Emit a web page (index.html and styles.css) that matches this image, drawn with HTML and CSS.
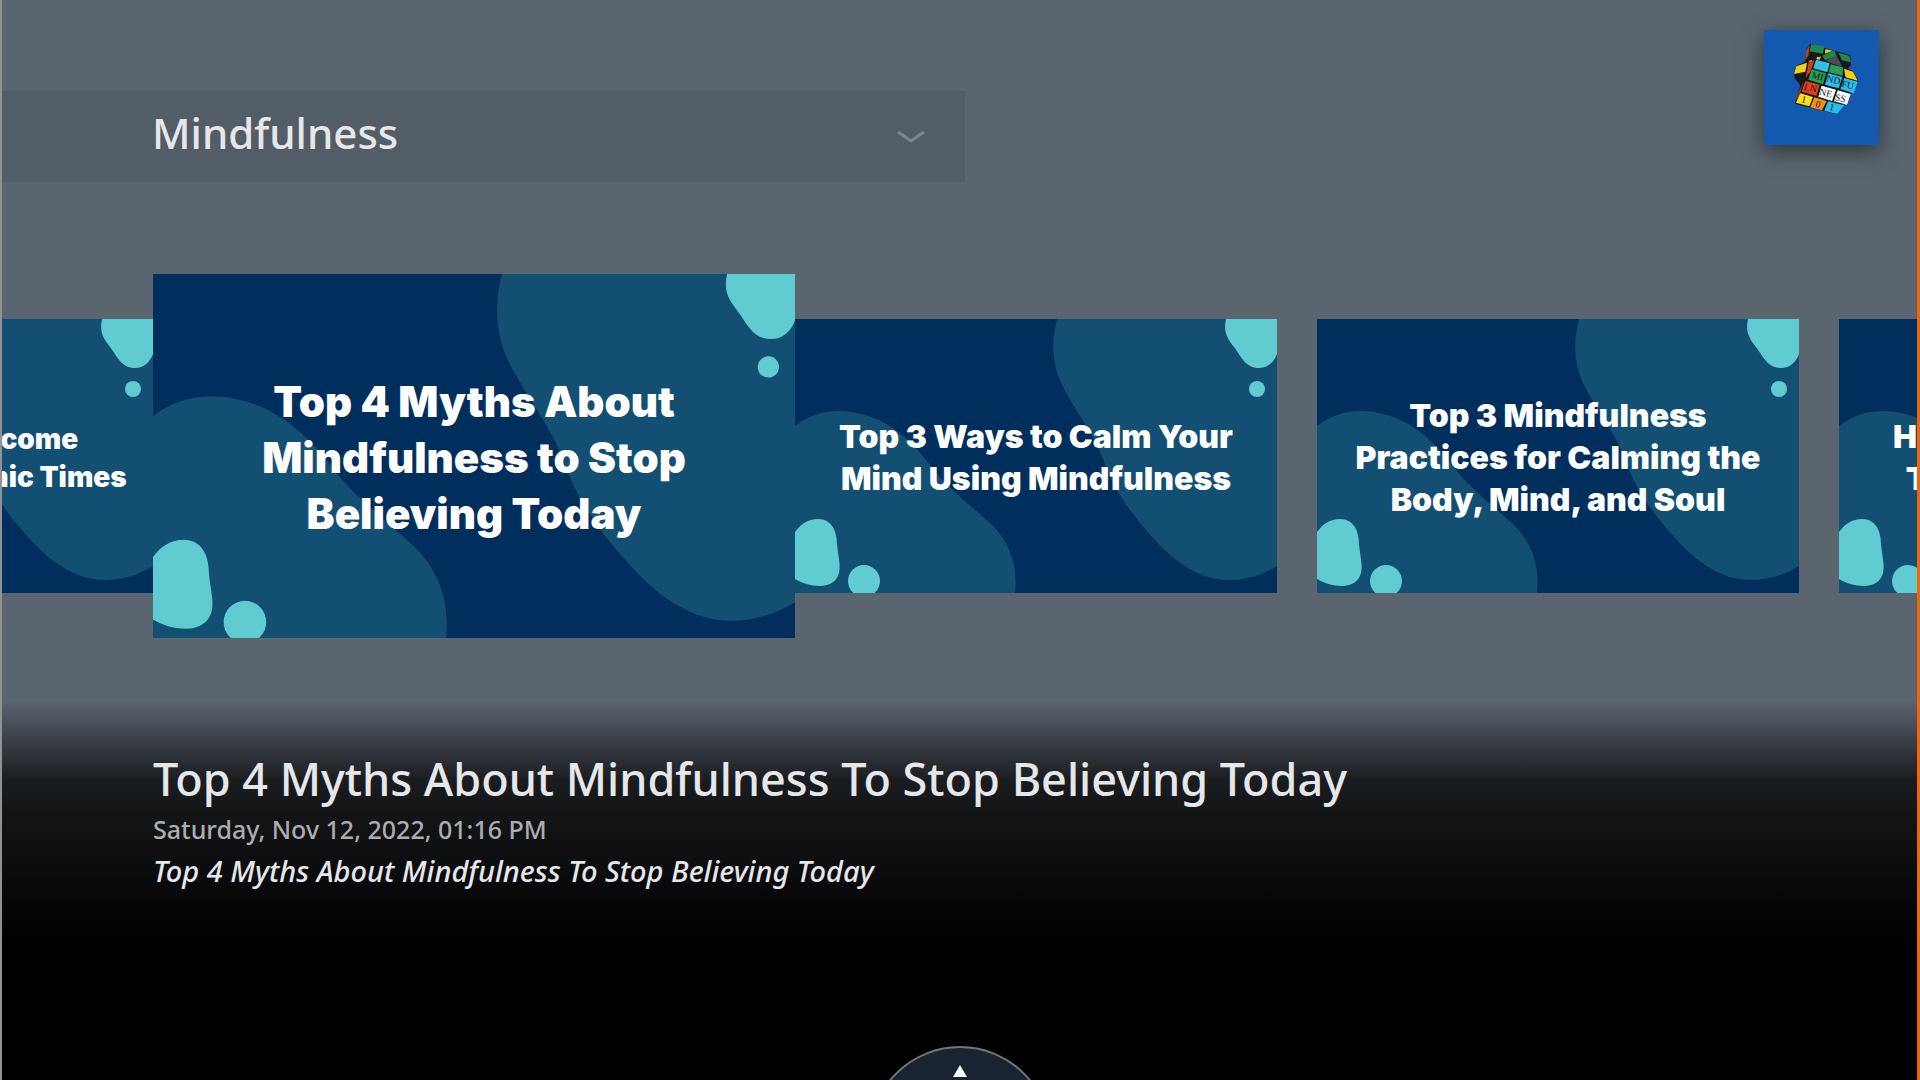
FILE: index.html
```html
<!DOCTYPE html>
<html lang="en">

<head>
  <meta charset="UTF-8">
  <meta name="viewport" content="width=device-width, initial-scale=1.0">
  <title>Mindfulness 101</title>
  <link rel="stylesheet" href="styles.css">
</head>

<body>
  <!-- Shared card background -->
  <svg class="defs" width="0" height="0" aria-hidden="true">
    <symbol id="card-art" viewBox="0 0 482 274" preserveAspectRatio="none">
      <rect width="482" height="274" fill="#002f5d" />
      <path fill="#134f72" d="M262 0C256 22 257 46 267 66C280 92 299 115 308 140C318 170 336 195 358 219C383 247 408 261 434 261C453 261 469 255 482 247V0Z" />
      <path fill="#134f72" d="M0 107C14 96 29 92 45 92C83 93 112 115 135 146C154 171 177 187 197 206C214 223 223 245 220 274H0Z" />
      <path fill="#60cbd0" d="M431 0C428 14 433 20 439 28C447 39 451 49 464 49C473 49 479 43 482 35V0Z" />
      <circle fill="#60cbd0" cx="462" cy="70" r="8" />
      <path fill="#60cbd0" d="M0 213C6 205 13 200 23 200C36 200 42 211 42 225C43 237 46 246 44 254C42 262 35 267 25 267C15 267 7 264 0 260Z" />
      <circle fill="#60cbd0" cx="69" cy="262" r="16" />
    </symbol>
  </svg>

  <header class="header">
    <div class="category">
      <select class="category-select" aria-label="Category">
        <option>Mindfulness</option>
      </select>
      <svg class="chevron" width="30" height="14" viewBox="0 0 30 14" aria-hidden="true">
        <path d="M2 2L15 11L28 2" fill="none" stroke="#7e868d" stroke-width="3" />
      </svg>
    </div>

    <svg class="logo" viewBox="73 60 345 345" role="img" aria-label="Mindfulness 101">
      <rect x="73" y="60" width="345" height="345" fill="#1459b0" />
      <path fill="#16191c" d="M211 101L332 136L334 164L325 176L340 184L356 213L292 313L165 281L182 226L166 206L162 190L170 168L196 155L200 118Z" />
      <path fill="#4b4d4f" d="M258 152L290 134L308 170L275 160Z" />
      <path fill="#1c8a4b" d="M215 103L255 109L249 131L209 124Z" />
      <path fill="#b3402c" d="M210 105L206 138L196 151L199 122Z" />
      <path fill="#f3c615" d="M257 117L280 122L256 131Z" />
      <path fill="#1c8a4b" d="M248 137L284 121L290 137L256 151Z" />
      <path fill="#1c8a4b" d="M296 128L329 137L334 157L307 151Z" />
      <path fill="#f8cf12" d="M170 169L202 158L197 185L163 192Z" />
      <path fill="#f3c615" d="M206 153L218 150L212 157ZM232 141L244 140L240 149L230 148Z" />
      <path fill="#d63b22" d="M207 157L224 151L212 185L198 203Z" />
      <path fill="#8d3a25" d="M192 216L180 255L168 272L170 258Z" />
      <path fill="#33bfe6" d="M229 149L270 160L263 187L221 175Z" />
      <path fill="#2c9c55" d="M273 163L310 172L309 197L267 187Z" />
      <path fill="#f8cf12" d="M313 176L340 185L354 212L318 202Z" />
      <path fill="#22a056" d="M216 178L259 190L250 223L206 209Z" />
      <path fill="#2bbdea" d="M266 190L308 201L297 235L256 224Z" />
      <path fill="#2bbdea" d="M314 204L354 215L342 250L302 237Z" />
      <path fill="#e63f22" d="M197 213L240 224L230 257L186 245Z" />
      <path fill="#fff" d="M246 227L289 239L277 273L236 260Z" />
      <path fill="#fff" d="M294 241L333 252L322 284L283 274Z" />
      <path fill="#fbe116" d="M182 250L220 261L209 289L169 278Z" />
      <path fill="#f98d1c" d="M224 262L261 273L247 301L212 292Z" />
      <path fill="#2bbdea" d="M265 274L314 286L292 312L254 302Z" />
      <g class="logo-letters">
        <text transform="translate(232 208) rotate(14)">MI</text>
        <text transform="translate(279 219) rotate(14)">ND</text>
        <text transform="translate(322 234) rotate(14)">FU</text>
        <text transform="translate(210 243) rotate(14)">LN</text>
        <text transform="translate(256 258) rotate(14)">NE</text>
        <text transform="translate(300 274) rotate(14)">SS</text>
        <text transform="translate(190 278) rotate(14)">1</text>
        <text transform="translate(233 292) rotate(14)">0</text>
        <text transform="translate(274 301) rotate(14)">1</text>
      </g>
    </svg>
  </header>

  <main class="main">
    <nav class="carousel" aria-label="Videos">
      <a class="card card-first" href="#">
        <svg class="card-art" aria-hidden="true"><use href="#card-art" /></svg>
        <span class="card-title card-title-small">Best Ways to Overcome<br>Stress During Pandemic Times</span>
      </a>
      <a class="card card-active" href="#" aria-current="true">
        <svg class="card-art" aria-hidden="true"><use href="#card-art" /></svg>
        <span class="card-title">Top 4 Myths About<br>Mindfulness to Stop<br>Believing Today</span>
      </a>
      <a class="card" href="#">
        <svg class="card-art" aria-hidden="true"><use href="#card-art" /></svg>
        <span class="card-title">Top 3 Ways to Calm Your<br>Mind Using Mindfulness</span>
      </a>
      <a class="card" href="#">
        <svg class="card-art" aria-hidden="true"><use href="#card-art" /></svg>
        <span class="card-title">Top 3 Mindfulness<br>Practices for Calming the<br>Body, Mind, and Soul</span>
      </a>
      <a class="card" href="#">
        <svg class="card-art" aria-hidden="true"><use href="#card-art" /></svg>
        <span class="card-title">How to Practice Being a<br>Thoughtful Every Day</span>
      </a>
    </nav>

    <section class="info">
      <h1 class="info-title">Top 4 Myths About Mindfulness To Stop Believing Today</h1>
      <p class="info-date">Saturday, Nov 12, 2022, 01:16 PM</p>
      <p class="info-text">Top 4 Myths About Mindfulness To Stop Believing Today</p>
      <div class="menu">
        <button class="menu-button" type="button" aria-label="Open menu">
          <svg width="14" height="12" viewBox="0 0 14 12" aria-hidden="true">
            <path d="M7 0L14 12H0Z" fill="#fff" />
          </svg>
        </button>
      </div>
    </section>
  </main>
</body>

</html>
```
FILE: styles.css
```css
* {
  box-sizing: border-box;
}

body {
  margin: 0;
  display: flex;
  flex-direction: column;
  height: 100vh;
  overflow: hidden;
  background-color: #5b656f;
  border-left: 2px solid #8f9396;
  border-right: 3px solid #ec660d;
  color: #e6e7e9;
  font-family: "Noto Sans", "Open Sans", sans-serif;
  font-weight: 500;
}

.defs {
  position: absolute;
}

.header {
  display: flex;
  justify-content: space-between;
  align-items: flex-start;
  padding: 30px 38px 0 0;
}

.category {
  display: grid;
  align-items: center;
  width: 963px;
  height: 91px;
  margin-top: 61px;
  background-color: #535d66;
}

.category-select {
  grid-area: 1 / 1;
  width: 100%;
  height: 91px;
  padding: 0 100px 8px 150px;
  border: none;
  background: none;
  appearance: none;
  color: #e6e7e9;
  font-family: inherit;
  font-size: 42px;
  font-weight: 500;
  cursor: pointer;
}

.chevron {
  grid-area: 1 / 1;
  justify-self: end;
  margin-right: 39px;
  pointer-events: none;
}

.logo {
  width: 115px;
  height: 115px;
  box-shadow: 0 6px 20px rgba(0, 0, 0, 0.5);
}

.logo-letters {
  fill: #111;
  font-family: "Liberation Serif", serif;
  font-size: 29px;
  text-anchor: middle;
}

.main {
  flex: 1;
  display: flex;
  flex-direction: column;
}

.carousel {
  display: flex;
  align-items: center;
  margin-top: 92px;
  overflow: hidden;
}

.card {
  flex: none;
  display: grid;
  place-items: center;
  width: 482px;
  height: 274px;
  margin-right: 40px;
  color: #fff;
  font-size: 32px;
  line-height: 42px;
  text-decoration: none;
}

.card-first {
  margin-left: -331px;
  margin-right: 0;
}

.card-active {
  width: 642px;
  height: 364px;
  margin-right: 0;
  font-size: 42px;
  line-height: 56px;
}

.card-art {
  grid-area: 1 / 1;
  width: 100%;
  height: 100%;
}

.card-title {
  grid-area: 1 / 1;
  padding-top: 4px;
  font-family: Inter, "Liberation Sans", sans-serif;
  font-weight: 900;
  text-align: center;
  white-space: nowrap;
}

.card-title-small {
  font-size: 28px;
  line-height: 38px;
}

.info {
  flex: 1;
  display: flex;
  flex-direction: column;
  margin-top: 62px;
  padding: 47px 151px 0;
  background: linear-gradient(#5b656f 0, #3b4048 40px, #1a1d20 80px, #131517 110px, #0d0e10 160px, #040405 215px, #000 250px);
}

.info-title {
  margin: 0;
  font-size: 45px;
  font-weight: 500;
  line-height: 64px;
}

.info-date {
  margin: 0;
  color: #abadae;
  font-size: 25px;
  line-height: 36px;
}

.info-text {
  margin: 4px 0 0;
  font-size: 29px;
  font-style: italic;
  line-height: 40px;
}

.menu {
  display: flex;
  justify-content: center;
  height: 34px;
  margin-top: auto;
  overflow: hidden;
}

.menu-button {
  flex: none;
  display: flex;
  justify-content: center;
  width: 182px;
  height: 182px;
  padding: 17px 0 0;
  border: 2px solid #6f767c;
  border-radius: 50%;
  background-color: #1a2430;
  cursor: pointer;
}
```
